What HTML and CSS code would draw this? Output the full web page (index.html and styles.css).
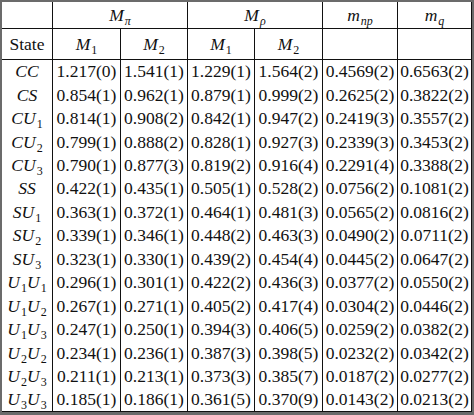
FILE: index.html
```html
<!DOCTYPE html>
<html>
<head>
<meta charset="utf-8">
<title>Masses</title>
<link rel="stylesheet" href="styles.css">
</head>
<body>
<table class="results">
<colgroup>
<col class="w-state"><col class="w-68"><col class="w-67"><col class="w-67"><col class="w-68"><col class="w-75"><col class="w-74">
</colgroup>
<thead>
<tr class="h1">
<th></th>
<th colspan="2"><i>M</i><sub class="g">π</sub></th>
<th colspan="2"><i>M</i><sub class="g">ρ</sub></th>
<th><i>m</i><sub class="it">np</sub></th>
<th><i>m</i><sub class="it">q</sub></th>
</tr>
<tr class="h2">
<th>State</th>
<th><i>M</i><sub>1</sub></th>
<th><i>M</i><sub>2</sub></th>
<th><i>M</i><sub>1</sub></th>
<th><i>M</i><sub>2</sub></th>
<th></th>
<th></th>
</tr>
</thead>
<tbody>
<tr><td><i>CC</i></td><td>1.217(0)</td><td>1.541(1)</td><td>1.229(1)</td><td>1.564(2)</td><td>0.4569(2)</td><td>0.6563(2)</td></tr>
<tr><td><i>CS</i></td><td>0.854(1)</td><td>0.962(1)</td><td>0.879(1)</td><td>0.999(2)</td><td>0.2625(2)</td><td>0.3822(2)</td></tr>
<tr><td><i>CU</i><sub>1</sub></td><td>0.814(1)</td><td>0.908(2)</td><td>0.842(1)</td><td>0.947(2)</td><td>0.2419(3)</td><td>0.3557(2)</td></tr>
<tr><td><i>CU</i><sub>2</sub></td><td>0.799(1)</td><td>0.888(2)</td><td>0.828(1)</td><td>0.927(3)</td><td>0.2339(3)</td><td>0.3453(2)</td></tr>
<tr><td><i>CU</i><sub>3</sub></td><td>0.790(1)</td><td>0.877(3)</td><td>0.819(2)</td><td>0.916(4)</td><td>0.2291(4)</td><td>0.3388(2)</td></tr>
<tr><td><i>SS</i></td><td>0.422(1)</td><td>0.435(1)</td><td>0.505(1)</td><td>0.528(2)</td><td>0.0756(2)</td><td>0.1081(2)</td></tr>
<tr><td><i>SU</i><sub>1</sub></td><td>0.363(1)</td><td>0.372(1)</td><td>0.464(1)</td><td>0.481(3)</td><td>0.0565(2)</td><td>0.0816(2)</td></tr>
<tr><td><i>SU</i><sub>2</sub></td><td>0.339(1)</td><td>0.346(1)</td><td>0.448(2)</td><td>0.463(3)</td><td>0.0490(2)</td><td>0.0711(2)</td></tr>
<tr><td><i>SU</i><sub>3</sub></td><td>0.323(1)</td><td>0.330(1)</td><td>0.439(2)</td><td>0.454(4)</td><td>0.0445(2)</td><td>0.0647(2)</td></tr>
<tr><td><i>U</i><sub>1</sub><i>U</i><sub>1</sub></td><td>0.296(1)</td><td>0.301(1)</td><td>0.422(2)</td><td>0.436(3)</td><td>0.0377(2)</td><td>0.0550(2)</td></tr>
<tr><td><i>U</i><sub>1</sub><i>U</i><sub>2</sub></td><td>0.267(1)</td><td>0.271(1)</td><td>0.405(2)</td><td>0.417(4)</td><td>0.0304(2)</td><td>0.0446(2)</td></tr>
<tr><td><i>U</i><sub>1</sub><i>U</i><sub>3</sub></td><td>0.247(1)</td><td>0.250(1)</td><td>0.394(3)</td><td>0.406(5)</td><td>0.0259(2)</td><td>0.0382(2)</td></tr>
<tr><td><i>U</i><sub>2</sub><i>U</i><sub>2</sub></td><td>0.234(1)</td><td>0.236(1)</td><td>0.387(3)</td><td>0.398(5)</td><td>0.0232(2)</td><td>0.0342(2)</td></tr>
<tr><td><i>U</i><sub>2</sub><i>U</i><sub>3</sub></td><td>0.211(1)</td><td>0.213(1)</td><td>0.373(3)</td><td>0.385(7)</td><td>0.0187(2)</td><td>0.0277(2)</td></tr>
<tr><td><i>U</i><sub>3</sub><i>U</i><sub>3</sub></td><td>0.185(1)</td><td>0.186(1)</td><td>0.361(5)</td><td>0.370(9)</td><td>0.0143(2)</td><td>0.0213(2)</td></tr>
</tbody>
</table>
</body>
</html>
```

FILE: styles.css
```css
html, body {
  margin: 0;
  padding: 0;
}
body {
  background: #6b6b6b;
  padding: 2px 2px 3px 2px;
  width: 474px;
  height: 415px;
  box-sizing: border-box;
  overflow: hidden;
}
.results {
  border-collapse: separate;
  border-spacing: 0;
  table-layout: fixed;
  width: 470px;
  height: 410px;
  background: #fff;
  color: #111;
  font-family: "Liberation Serif", serif;
  font-size: 17.5px;
  line-height: 20px;
}
.w-state { width: 51px; }
.w-68 { width: 68px; }
.w-67 { width: 67px; }
.w-75 { width: 75px; }
.w-74 { width: 74px; }
.results th,
.results td {
  padding: 0;
  text-align: center;
  vertical-align: middle;
  font-weight: normal;
  white-space: nowrap;
  border-right: 1px solid #111;
}
.h1 {
  height: 27px;
}
.h1 th {
  border-bottom: 1px solid #111;
}
.h2 {
  height: 31px;
}
.h2 th {
  border-bottom: 1px solid #111;
}
.results tbody tr {
  height: 22px;
}
.results tbody td {
  line-height: 21px;
}
.results tbody tr:last-child td {
  border-bottom: 1px solid #111;
}
.results i {
  font-style: italic;
}
.results sub {
  font-size: 12px;
  line-height: 0;
  vertical-align: -4px;
  font-style: normal;
  margin-left: 1px;
}
.results sub.g,
.results sub.it {
  font-style: italic;
}
```
